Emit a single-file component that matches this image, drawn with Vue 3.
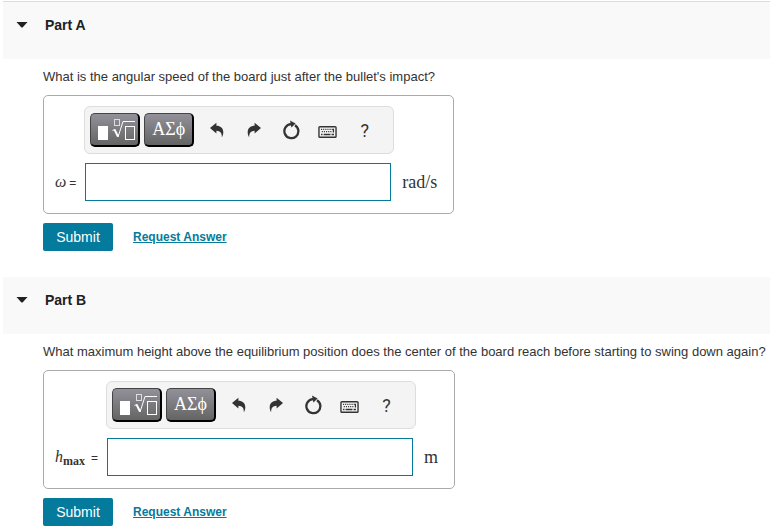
<script setup>
import { reactive } from 'vue'

const parts = reactive([
  {
    id: 'a',
    title: 'Part A',
    question: "What is the angular speed of the board just after the bullet's impact?",
    symbol: 'ω',
    sub: '',
    unit: 'rad/s',
    open: true,
    answer: '',
  },
  {
    id: 'b',
    title: 'Part B',
    question:
      'What maximum height above the equilibrium position does the center of the board reach before starting to swing down again?',
    symbol: 'h',
    sub: 'max',
    unit: 'm',
    open: true,
    answer: '',
  },
])
</script>

<template>
  <main class="page">
    <section v-for="part in parts" :key="part.id" class="part">
      <header class="part-head">
        <button
          type="button"
          class="toggle"
          :aria-expanded="part.open"
          :aria-label="'Toggle ' + part.title"
          @click="part.open = !part.open"
        >
          <svg width="12" height="6" viewBox="0 0 12 6"><path d="M0.5 0H11.5L6.8 5.2Q6 6 5.2 5.2Z" fill="#212121" /></svg>
        </button>
        <h2 class="title">{{ part.title }}</h2>
      </header>
      <div v-if="part.open" class="body">
        <p class="question">{{ part.question }}</p>
        <form class="form" @submit.prevent>
          <div class="answer">
            <div class="toolbar" role="toolbar">
              <button type="button" class="math-btn" aria-label="Templates">
                <svg width="41" height="23" viewBox="0 0 41 23" fill="none" stroke="#fff">
                  <rect x="4" y="8" width="10" height="14" fill="#fff" stroke="none" />
                  <rect x="20.5" y="1.5" width="5" height="6" stroke="#ddd" />
                  <path d="M18.5 12.5L20.5 11.5L24 19L29 3.5H41" />
                  <path d="M20.5 11.5L24 18.5" stroke-width="2" />
                  <rect x="31.5" y="8.5" width="9" height="13" />
                </svg>
              </button>
              <button type="button" class="math-btn greek" aria-label="Symbols">ΑΣϕ</button>
              <div class="tools">
                <button type="button" class="tool" aria-label="Undo">
                  <svg width="14" height="16" viewBox="0 0 14 16"><path d="M0 6L6.4 0.8V3.8C10.4 3.8 13.3 6 13.3 10.2C13.3 12.2 12.7 14 11.8 15.2C12.1 11 10.2 8.8 6.4 8.7V11.5Z" fill="#333" /></svg>
                </button>
                <button type="button" class="tool" aria-label="Redo">
                  <svg width="14" height="16" viewBox="0 0 14 16"><path d="M14 6L7.6 0.8V3.8C3.6 3.8 0.7 6 0.7 10.2C0.7 12.2 1.3 14 2.2 15.2C1.9 11 3.8 8.8 7.6 8.7V11.5Z" fill="#333" /></svg>
                </button>
                <button type="button" class="tool" aria-label="Reset">
                  <svg width="18" height="20" viewBox="0 0 18 20">
                    <path d="M13 5.2A7 7 0 1 1 9 4.2" fill="none" stroke="#333" stroke-width="2.3" />
                    <path d="M8 0.6L13.6 3.6L9.4 7.6Z" fill="#333" />
                  </svg>
                </button>
                <button type="button" class="tool keyboard" aria-label="Keyboard">
                  <svg width="19" height="12" viewBox="0 0 20 13">
                    <rect x="0.75" y="0.75" width="18.5" height="11.5" rx="1" fill="none" stroke="#333" stroke-width="1.5" />
                    <path d="M3 3.7H17M3.8 6.2H15" stroke="#333" stroke-width="1.3" stroke-dasharray="1.2 1.1" />
                    <path d="M3 9.2H4.6M5.8 9.2H13.2M14.4 9.2H17M16.4 3V7" stroke="#333" stroke-width="1.4" />
                  </svg>
                </button>
                <button type="button" class="tool help" aria-label="Help">?</button>
              </div>
            </div>
            <label class="label" :for="'answer-' + part.id">
              <i class="symbol">{{ part.symbol }}</i><sub v-if="part.sub">{{ part.sub }}</sub><span class="equals">=</span>
            </label>
            <input :id="'answer-' + part.id" v-model="part.answer" class="field" type="text" autocomplete="off" />
            <span class="unit">{{ part.unit }}</span>
          </div>
          <div class="actions">
            <button type="submit" class="submit">Submit</button>
            <a href="#" class="request" @click.prevent>Request Answer</a>
          </div>
        </form>
      </div>
    </section>
  </main>
</template>

<style>
body {
  margin: 0;
  background: #fff;
}
</style>

<style scoped>
.page {
  padding: 1px 0 0 3px;
  font-family: "Liberation Sans", Arial, sans-serif;
  color: #333;
}
.part:first-child {
  border-top: 1px solid #ddd;
}
.part-head {
  display: flex;
  align-items: center;
  gap: 16px;
  padding: 15px 12px 26px;
  background: #f9f9f9;
}
.toggle {
  display: flex;
  align-items: center;
  justify-content: center;
  width: 14px;
  height: 16px;
  padding: 0;
  border: 0;
  background: none;
  cursor: pointer;
}
.title {
  margin: 0;
  font-size: 14px;
  line-height: 16px;
  color: #212121;
}
.body {
  padding: 10px 0 26px 40px;
}
.question {
  margin: 0 0 10px;
  font-size: 13px;
  line-height: 16px;
  white-space: nowrap;
}
.form {
  display: flex;
  flex-direction: column;
  align-items: flex-start;
  gap: 9px;
}
.answer {
  display: grid;
  grid-template-columns: auto auto auto;
  gap: 9px 8px;
  align-items: center;
  padding: 10px 16px 12px 11px;
  border: 1px solid #aaa;
  border-radius: 5px;
}
.toolbar {
  grid-column: 2;
  display: flex;
  gap: 4px;
  padding: 6px 10px 6px 5px;
  border: 1px solid #ddd;
  border-radius: 6px;
  background: #f4f4f4;
}
.math-btn {
  display: flex;
  align-items: center;
  justify-content: center;
  width: 50px;
  height: 34px;
  padding: 0;
  border: 1px solid #000;
  border-top-color: #444;
  border-left-color: #444;
  border-width: 1px 2px 2px 1px;
  border-radius: 5px;
  background: linear-gradient(#92919a, #646464);
  color: #fff;
}
.greek {
  font-family: "Liberation Serif", serif;
  font-size: 18px;
}
.tools {
  display: flex;
}
.tool {
  display: flex;
  align-items: center;
  justify-content: center;
  width: 37px;
  height: 34px;
  padding: 0;
  border: 0;
  background: none;
  color: #333;
}
.keyboard {
  padding-top: 4px;
}
.help {
  font-family: Roboto, sans-serif;
  font-size: 18px;
}
.label {
  grid-column: 1;
  font-family: "Liberation Serif", serif;
  font-size: 12px;
  line-height: 20px;
  white-space: nowrap;
}
.symbol {
  font-size: 16px;
}
.label sub {
  margin-right: 3px;
  font-size: 12px;
  font-weight: bold;
  line-height: 0;
  vertical-align: -3px;
}
.equals {
  margin-left: 3px;
  font-family: "Liberation Sans", Arial, sans-serif;
}
.field {
  box-sizing: border-box;
  width: 306px;
  height: 38px;
  margin: 0 0 0 1px;
  padding: 0 8px;
  border: 1px solid #047a9c;
  background: #fff;
  font: 16px "Liberation Serif", serif;
}
.field:focus {
  outline: 1px solid #047a9c;
}
.unit {
  font-family: "Liberation Serif", serif;
  font-size: 18px;
  line-height: 20px;
}
.actions {
  display: flex;
  align-items: center;
  gap: 20px;
}
.submit {
  width: 70px;
  height: 28px;
  padding: 0;
  border: 0;
  border-radius: 2px;
  background: #047a9c;
  color: #fff;
  font: 14px "Liberation Sans", Arial, sans-serif;
}
.request {
  color: #047a9c;
  font-size: 12px;
  font-weight: bold;
  line-height: 16px;
}
</style>
